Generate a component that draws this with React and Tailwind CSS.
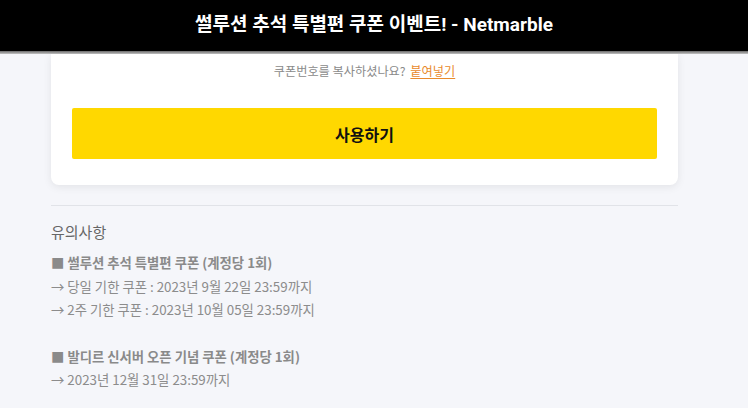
import React from 'react';

const notices = [
  {
    title: '썰루션 추석 특별편 쿠폰 (계정당 1회)',
    lines: ['→ 당일 기한 쿠폰 : 2023년 9월 22일 23:59까지', '→ 2주 기한 쿠폰 : 2023년 10월 05일 23:59까지'],
  },
  {
    title: '발디르 신서버 오픈 기념 쿠폰 (계정당 1회)',
    lines: ['→ 2023년 12월 31일 23:59까지'],
  },
];

const App = () => {
  return (
    <div
      className="w-[748px] h-[408px] overflow-hidden bg-[#f5f6fa]"
      style={{ fontFamily: '"Noto Sans CJK KR", "Noto Sans", sans-serif' }}
    >
      {/* Title bar */}
      <header className="h-[51px] bg-black flex items-center justify-center">
        <h1
          className="text-white text-[19px] font-bold"
          style={{ fontFamily: 'Roboto, "Noto Sans CJK KR", sans-serif' }}
        >
          썰루션 추석 특별편 쿠폰 이벤트! - Netmarble
        </h1>
      </header>
      <div className="h-[3px] bg-gradient-to-b from-[#6b6b6b] to-[#c4c4c4]" />

      <main className="ml-[51px] w-[627px]">
        {/* Coupon card */}
        <section className="bg-white rounded-b-[8px] shadow-[0_2px_8px_rgba(0,0,0,0.08)] px-[21px] pt-[7px] pb-[26px]">
          <p className="text-center text-[12.2px] text-[#8a8a8a] leading-[20px]">
            쿠폰번호를 복사하셨나요?{' '}
            <a href="#" className="ml-[2px] text-[#e98a2c] underline underline-offset-2">
              붙여넣기
            </a>
          </p>
          <button className="mt-[27px] w-[585px] h-[51px] rounded-[2px] bg-[#ffd800] text-[16px] font-bold text-[#111]">
            사용하기
          </button>
        </section>

        {/* Notice */}
        <div className="mt-[20px] border-t border-[#e1e3e8] pt-[15px]">
          <h2 className="text-[15px] text-[#666] leading-[22px]">유의사항</h2>
          <div className="mt-[8px] flex flex-col gap-[23px]">
            {notices.map((n) => (
              <div key={n.title} className="text-[13.35px] text-[#8c8c8c] leading-[23.5px]">
                <p className="font-bold text-[#8a8a8a]">■ {n.title}</p>
                {n.lines.map((l) => (
                  <p key={l}>{l}</p>
                ))}
              </div>
            ))}
          </div>
        </div>
      </main>
    </div>
  );
};

export default App;
